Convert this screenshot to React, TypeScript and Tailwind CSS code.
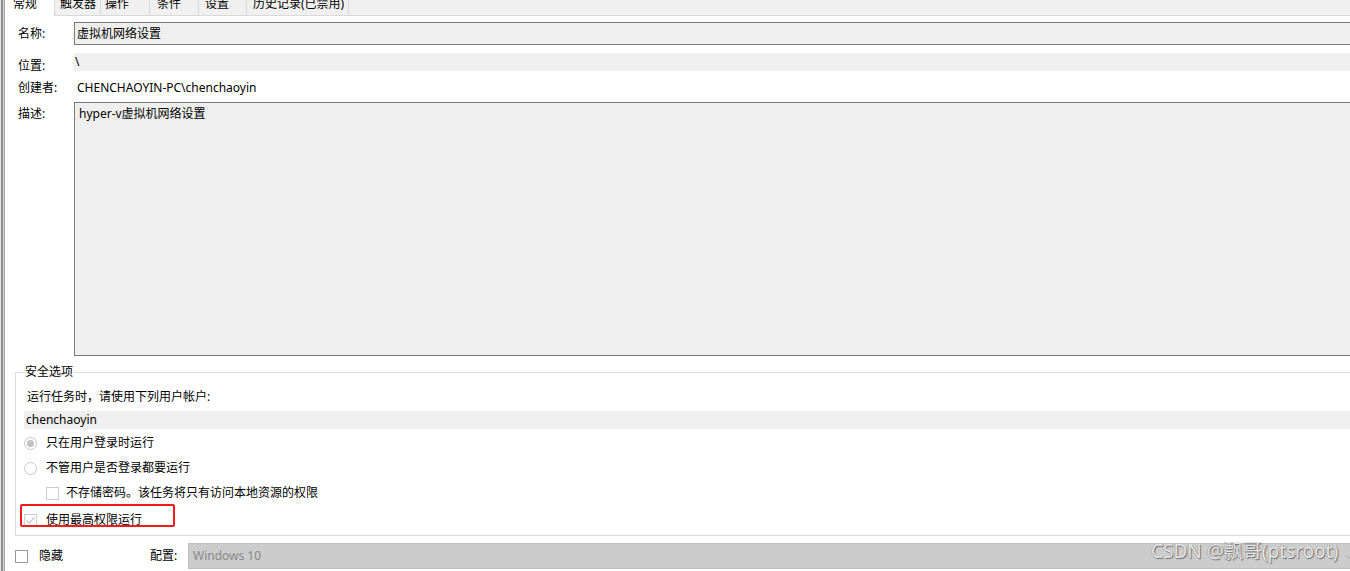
import React from "react";

const font = { fontFamily: '"Noto Sans", "Noto Sans CJK SC", sans-serif' };

function Radio({ checked }: { checked?: boolean }) {
  return (
    <span className="w-[13px] h-[13px] rounded-full border border-[#c6c6c6] bg-white flex items-center justify-center shrink-0">
      {checked && <span className="w-[7px] h-[7px] rounded-full bg-[#c3c3c3]" />}
    </span>
  );
}

function Check({ checked, dark }: { checked?: boolean; dark?: boolean }) {
  return (
    <span
      className={
        "w-[13px] h-[13px] border bg-white flex items-center justify-center shrink-0 " +
        (dark ? "border-[#9a9a9a]" : "border-[#cccccc]")
      }
    >
      {checked && (
        <svg width="11" height="11" viewBox="0 0 11 11">
          <path d="M1.5 5.5 L4.2 8.2 L9.5 2.2" fill="none" stroke="#c4c4c4" strokeWidth="1.2" />
        </svg>
      )}
    </span>
  );
}

export default function App() {
  const tabs = [
    { t: "触发器", w: "w-[46px]", pl: "pl-[5px]" },
    { t: "操作", w: "w-[49px]", pl: "pl-[4px]" },
    { t: "条件", w: "w-[49px]", pl: "pl-[7px]" },
    { t: "设置", w: "w-[48px]", pl: "pl-[6px]" },
    { t: "历史记录(已禁用)", w: "w-[102px]", pl: "pl-[6px]" },
  ];
  return (
    <div className="w-[1350px] h-[571px] bg-white flex overflow-hidden relative text-[12px] text-black" style={font}>
      {/* left frame edge */}
      <div className="flex shrink-0 h-full">
        <span className="w-px bg-[#e6e6e6]" />
        <span className="w-[2px] bg-[#8e8e8e]" />
        <span className="w-px bg-[#d4d4d4]" />
        <span className="w-px bg-[#a6a6a6]" />
      </div>
      <div className="flex-1 flex flex-col min-w-0">
        {/* tab strip */}
        <div className="h-[16px] flex bg-[#f0f0f0] border-b border-[#d9d9d9] shrink-0">
          <div className="w-[50px] h-[16px] bg-white border-r border-[#d9d9d9] pl-[8px] -mb-px overflow-hidden">
            <span className="block -mt-[4px] leading-[16px]">常规</span>
          </div>
          {tabs.map((x) => (
            <div key={x.t} className={"h-[15px] border-r border-[#d9d9d9] overflow-hidden whitespace-nowrap " + x.w + " " + x.pl}>
              <span className="block -mt-[4px] leading-[16px]">{x.t}</span>
            </div>
          ))}
        </div>

        {/* form */}
        <div className="flex flex-col">
          <div className="flex items-center mt-[6px] h-[23px]">
            <span className="w-[69px] pl-[13px] shrink-0">名称:</span>
            <div className="flex-1 h-[23px] bg-[#efefef] border border-[#7a7a7a] border-r-0 flex items-center pl-[2px]">
              虚拟机网络设置
            </div>
          </div>
          <div className="flex items-center mt-[8px] h-[18px]">
            <span className="w-[69px] pl-[13px] shrink-0 mt-[8px]">位置:</span>
            <div className="flex-1 h-[18px] bg-[#efefef] flex items-center pl-[1px]">\</div>
          </div>
          <div className="flex items-center mt-[8px] h-[18px]">
            <span className="w-[69px] pl-[13px] shrink-0">创建者:</span>
            <span className="pl-[3px]">CHENCHAOYIN-PC\chenchaoyin</span>
          </div>
          <div className="flex mt-[5px]">
            <span className="w-[69px] pl-[13px] shrink-0 mt-[3px]">描述:</span>
            <div className="flex-1 h-[254px] bg-[#efefef] border border-[#7a7a7a] border-r-0 pl-[4px] pt-[2px]">
              hyper-v虚拟机网络设置
            </div>
          </div>

          {/* security group */}
          <div className="relative ml-[10px] mt-[16px] h-[164px] border border-r-0 border-[#dcdcdc] flex flex-col">
            <span className="absolute -top-[9px] left-[8px] bg-white px-px leading-[16px]">安全选项</span>
            <div className="mt-[16px] pl-[11px] leading-[16px]">运行任务时，请使用下列用户帐户:</div>
            <div className="mt-[6px] ml-[8px] h-[18px] bg-[#efefef] flex items-center pl-[2px]">chenchaoyin</div>
            <div className="flex items-center mt-[6px] h-[16px] pl-[8px] gap-[9px]">
              <Radio checked />
              <span>只在用户登录时运行</span>
            </div>
            <div className="flex items-center mt-[9px] h-[16px] pl-[8px] gap-[9px]">
              <Radio />
              <span>不管用户是否登录都要运行</span>
            </div>
            <div className="flex items-center mt-[9px] h-[16px] pl-[30px] gap-[7px]">
              <Check />
              <span>不存储密码。该任务将只有访问本地资源的权限</span>
            </div>
            <div className="flex items-center mt-[11px] h-[16px] pl-[8px] gap-[9px]">
              <Check checked />
              <span>使用最高权限运行</span>
            </div>
            {/* red highlight */}
            <div className="absolute left-[4px] top-[131px] w-[155px] h-[23px] border-2 border-[#f21a1a] rounded-[2px]" />
          </div>

          {/* bottom row */}
          <div className="flex items-center mt-[7px] h-[26px]">
            <span className="ml-[10px]">
              <Check dark />
            </span>
            <span className="ml-[11px] w-[111px]">隐藏</span>
            <span className="w-[38px]">配置:</span>
            <div className="flex-1 h-[26px] bg-[#cccccc] border border-[#bdbdbd] border-r-0 flex items-center pl-[4px] text-[#8a8a8a] relative">
              Windows 10
              <svg className="absolute right-[-3px] top-[10px]" width="8" height="6" viewBox="0 0 8 6">
                <path d="M0.5 1 L4 4.5 L7.5 1" fill="none" stroke="#a8a8a8" strokeWidth="1" />
              </svg>
            </div>
          </div>
        </div>
      </div>

      {/* watermark */}
      <div
        className="absolute left-[1151px] top-[539px] text-[19px] leading-[24px] text-[#e4e4e4] whitespace-nowrap"
        style={{ textShadow: "1px 1px 1px #6e6e6e, -0.5px -0.5px 0 #9a9a9a" }}
      >
        CSDN @飘哥(ptsroot)
      </div>
    </div>
  );
}
